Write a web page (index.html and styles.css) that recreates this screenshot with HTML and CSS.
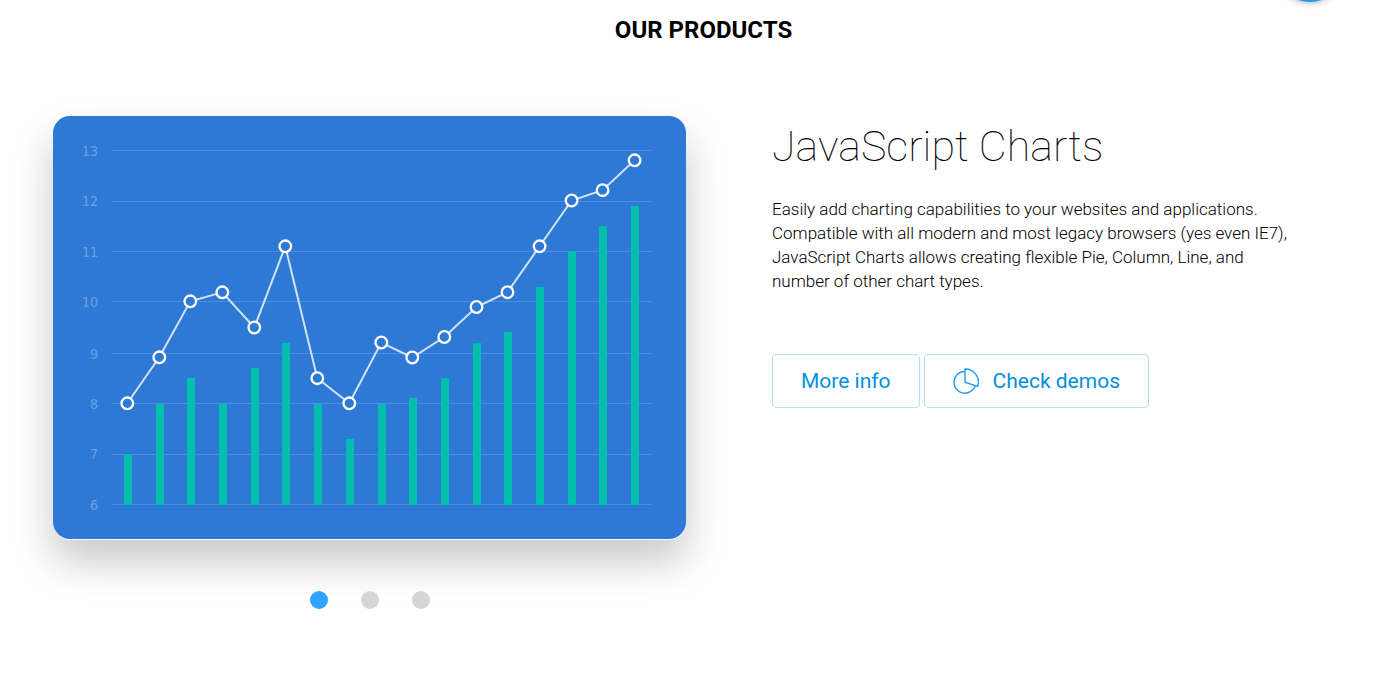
FILE: index.html
```html
<!DOCTYPE html>
<html lang="en">
<head>
<meta charset="utf-8">
<meta name="viewport" content="width=device-width, initial-scale=1">
<title>Our Products</title>
<link rel="stylesheet" href="styles.css">
</head>
<body>
<a class="fab" href="#contact" aria-label="Contact"></a>
<main class="products">
  <h2 class="products-title">OUR PRODUCTS</h2>
  <section class="product">
    <div class="product-media">
      <svg class="chart" viewBox="0 0 633 423" role="img" aria-label="Column and line chart">
        <path class="chart-grid" d="M59 34.5H598M59 85.5H598M59 135.5H598M59 185.5H598M59 237.5H598M59 287.5H598M59 338.5H598M59 388.5H598"/>
        <g class="chart-labels">
          <text x="45" y="40">13</text>
          <text x="45" y="90">12</text>
          <text x="45" y="141">11</text>
          <text x="45" y="191">10</text>
          <text x="45" y="243">9</text>
          <text x="45" y="293">8</text>
          <text x="45" y="343">7</text>
          <text x="45" y="394">6</text>
        </g>
        <path class="chart-bars" d="M71 389V338h8V389zM103 389V288h8V389zM134 389V262h8V389zM166 389V288h8V389zM198 389V252h8V389zM229 389V227h8V389zM261 389V288h8V389zM293 389V323h8V389zM325 389V288h8V389zM356 389V282h8V389zM388 389V262h8V389zM420 389V227h8V389zM451 389V216h8V389zM483 389V171h8V389zM515 389V135h8V389zM546 389V110h8V389zM578 389V90h8V389z"/>
        <polyline class="chart-line" points="74.3,287.3 106.3,241.3 137.3,185.3 169.3,176.3 201.3,211.5 232.3,130.3 264.3,262.2 296.3,287.3 328.3,226.5 359.3,241.5 391.3,221 423.5,191 454.5,176.2 486.6,130.3 518.6,84.5 549.6,74.2 581.6,44.3"/>
        <g class="chart-points">
          <circle cx="74.3" cy="287.3" r="5.8"/>
          <circle cx="106.3" cy="241.3" r="5.8"/>
          <circle cx="137.3" cy="185.3" r="5.8"/>
          <circle cx="169.3" cy="176.3" r="5.8"/>
          <circle cx="201.3" cy="211.5" r="5.8"/>
          <circle cx="232.3" cy="130.3" r="5.8"/>
          <circle cx="264.3" cy="262.2" r="5.8"/>
          <circle cx="296.3" cy="287.3" r="5.8"/>
          <circle cx="328.3" cy="226.5" r="5.8"/>
          <circle cx="359.3" cy="241.5" r="5.8"/>
          <circle cx="391.3" cy="221" r="5.8"/>
          <circle cx="423.5" cy="191" r="5.8"/>
          <circle cx="454.5" cy="176.2" r="5.8"/>
          <circle cx="486.6" cy="130.3" r="5.8"/>
          <circle cx="518.6" cy="84.5" r="5.8"/>
          <circle cx="549.6" cy="74.2" r="5.8"/>
          <circle cx="581.6" cy="44.3" r="5.8"/>
        </g>
      </svg>
      <div class="dots">
        <button class="dot dot-active" type="button" aria-label="Product 1"></button>
        <button class="dot" type="button" aria-label="Product 2"></button>
        <button class="dot" type="button" aria-label="Product 3"></button>
      </div>
    </div>
    <div class="product-info">
      <h3 class="product-name">JavaScript Charts</h3>
      <p class="product-text">Easily add charting capabilities to your websites and applications. Compatible with all modern and most legacy browsers (yes even IE7), JavaScript Charts allows creating flexible Pie, Column, Line, and number of other chart types.</p>
      <div class="actions">
        <a class="button" href="#info">More info</a>
        <a class="button" href="#demos">
          <svg class="button-icon" viewBox="0 0 26 26" aria-hidden="true"><path d="M12 3.2A11 11 0 1 0 22.2 18.2M12 1V14.2L24.6 18.4A13 13 0 0 0 12 1Z"/></svg>
          Check demos
        </a>
      </div>
    </div>
  </section>
</main>
</body>
</html>
```
FILE: styles.css
```css
* {
  box-sizing: border-box;
}

body {
  margin: 0;
  background: #fff;
  color: #000;
  font-family: Roboto, "Liberation Sans", sans-serif;
}

.fab {
  position: absolute;
  top: -68px;
  right: 55px;
  width: 70px;
  height: 70px;
  border-radius: 50%;
  background: #1e9bff;
  box-shadow: 0 1px 6px rgba(0, 0, 0, 0.3);
}

.products {
  padding: 16px 46px 48px 53px;
}

.products-title {
  margin: 0 0 72px;
  font-size: 24px;
  line-height: 28px;
  font-weight: 700;
  text-align: center;
}

.product {
  display: grid;
  grid-template-columns: 633fr 582fr;
  gap: 86px;
}

.chart {
  display: block;
  width: 100%;
  border-radius: 17px;
  background: #2f79d6;
  box-shadow: 0 1px 0 #fff, 0 22px 40px rgba(0, 0, 0, 0.22);
}

.chart-grid {
  fill: none;
  stroke: #fff;
  stroke-opacity: 0.15;
}

.chart-labels {
  fill: #fff;
  fill-opacity: 0.3;
  font-family: "DejaVu Sans Condensed", "DejaVu Sans", sans-serif;
  font-size: 14px;
  text-anchor: end;
}

.chart-bars {
  fill: #00bfaf;
}

.chart-line {
  fill: none;
  stroke: #d3e2f6;
  stroke-width: 2;
}

.chart-points {
  fill: #2f79d6;
  stroke: #fff;
  stroke-width: 2.3;
}

.dots {
  display: flex;
  justify-content: center;
  gap: 33px;
  margin-top: 52px;
}

.dot {
  width: 18px;
  height: 18px;
  padding: 0;
  border: 0;
  border-radius: 50%;
  background: #d6d6d6;
}

.dot-active {
  background: #2fa4ff;
}

.product-name {
  margin: 4px 0 25px;
  font-size: 43px;
  line-height: 52px;
  font-weight: 100;
}

.product-text {
  max-width: 530px;
  margin: 0 0 61px;
  font-size: 17px;
  line-height: 24px;
  font-weight: 350;
}

.actions {
  display: flex;
  gap: 4px;
}

.button {
  display: flex;
  align-items: center;
  gap: 14px;
  height: 54px;
  padding: 0 28px;
  border: 1px solid #b5dff2;
  border-radius: 4px;
  color: #0090e0;
  font-size: 21px;
  text-decoration: none;
}

.button-icon {
  width: 26px;
  height: 26px;
  fill: none;
  stroke: #1c9bf8;
  stroke-width: 1.4;
}
```
